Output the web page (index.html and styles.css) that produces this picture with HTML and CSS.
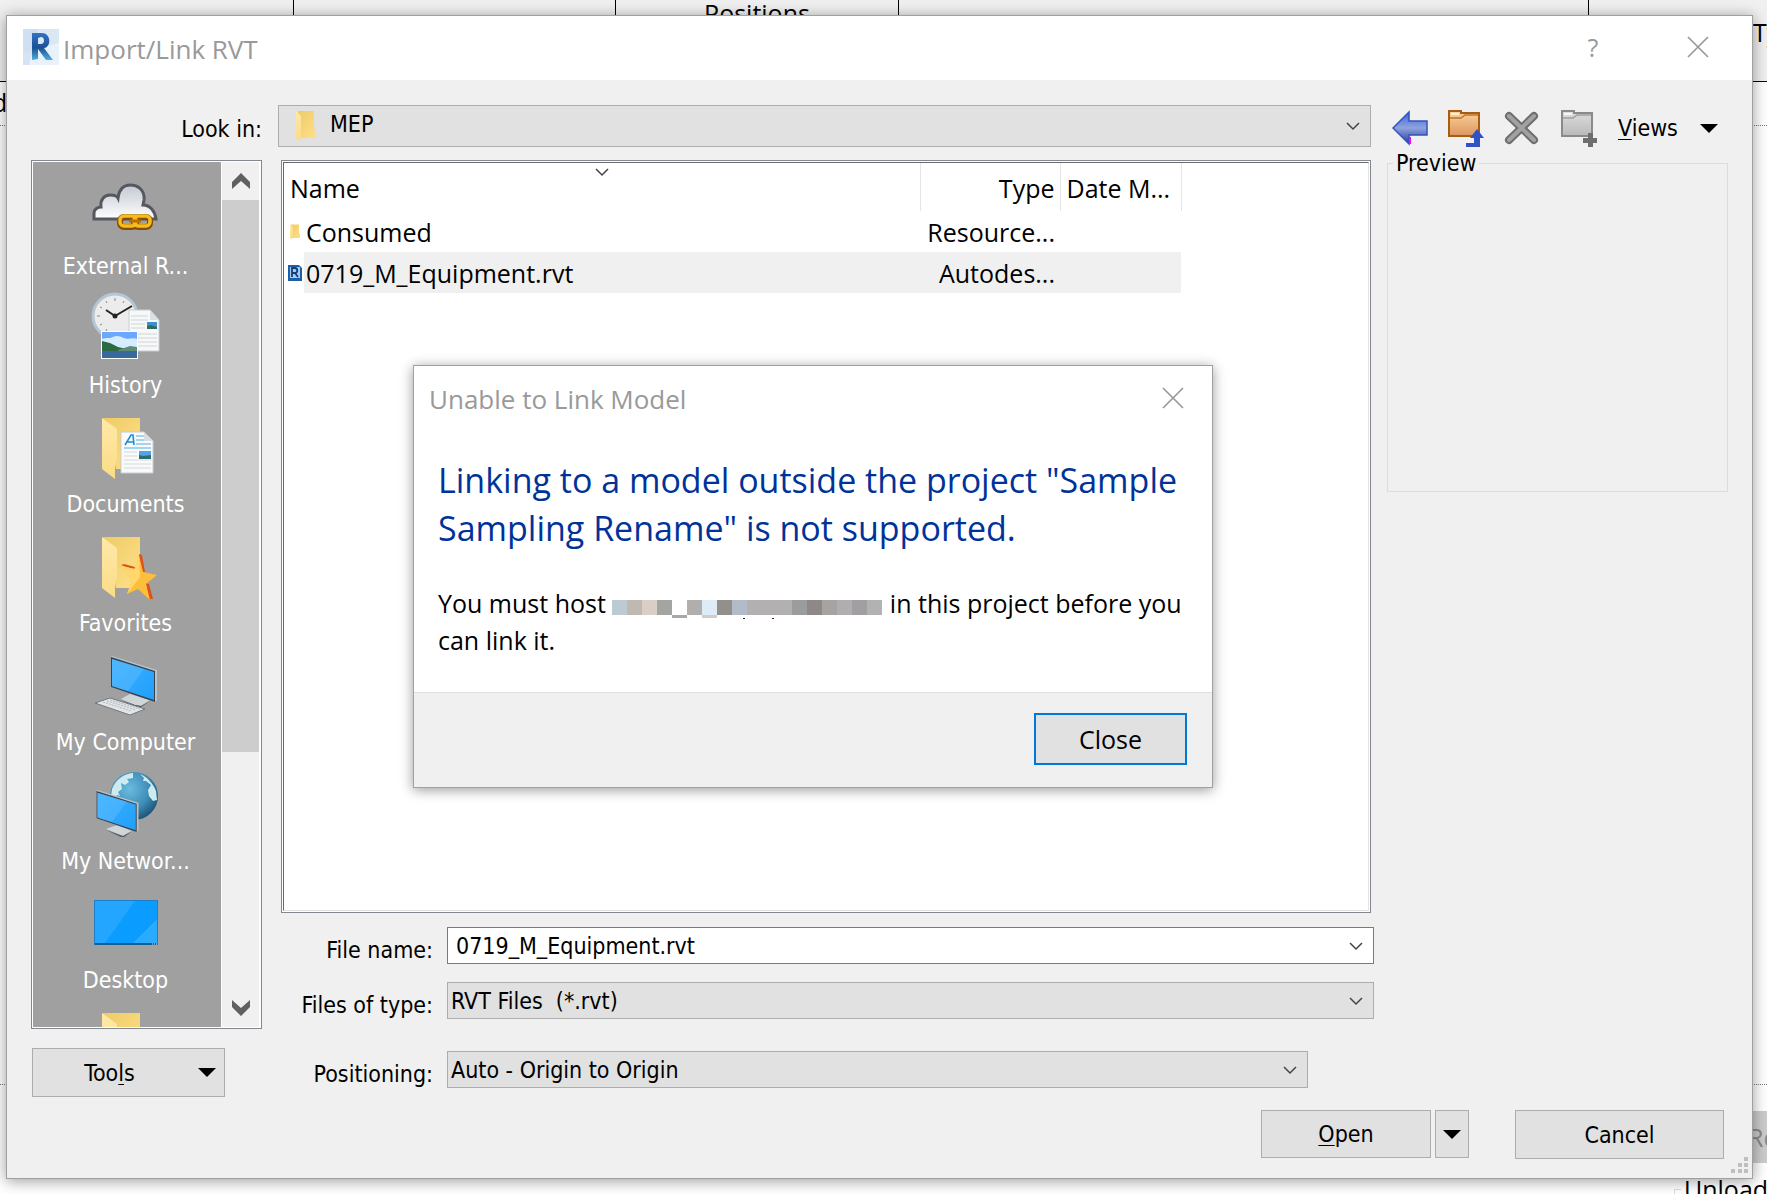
FILE: index.html
```
<!DOCTYPE html>
<html lang="en">
  <head>
    <meta charset="UTF-8" />
    <meta name="viewport" content="width=device-width, initial-scale=1.0" />
    <title>Import/Link RVT</title>
    <link rel="stylesheet" href="styles.css">
  </head>
  <body>
    <!-- shared shapes -->
    <svg class="defs" width="0" height="0" aria-hidden="true">
      <defs>
        <linearGradient id="gFolder" x1="0" y1="0" x2="1" y2="1">
          <stop offset="0" stop-color="#eecb66" />
          <stop offset="1" stop-color="#ffe08a" />
        </linearGradient>
        <linearGradient id="gFlap" x1="0" y1="0" x2="0" y2="1">
          <stop offset="0" stop-color="#ffe9a8" />
          <stop offset="1" stop-color="#fbdc86" />
        </linearGradient>
        <linearGradient id="gScreen" x1="0" y1="0" x2="1" y2="1">
          <stop offset="0" stop-color="#3fb0ff" />
          <stop offset="1" stop-color="#1fa0fb" />
        </linearGradient>
        <linearGradient id="gR" x1="0" y1="0" x2="0" y2="1">
          <stop offset="0" stop-color="#2f74c4" />
          <stop offset="0.55" stop-color="#1d4f94" />
          <stop offset="1" stop-color="#4db0d8" />
        </linearGradient>
        <symbol id="chevron" viewBox="0 0 14 9">
          <path d="M1 1l6 6 6-6" fill="none" stroke="#444" stroke-width="1.5" />
        </symbol>
        <symbol id="cross" viewBox="0 0 22 22">
          <path d="M1 1l20 20M21 1L1 21" fill="none" stroke="#999" stroke-width="1.7" />
        </symbol>
        <symbol id="triangle" viewBox="0 0 18 9">
          <path d="M0 0h18l-9 9z" />
        </symbol>
        <symbol id="smallFolder" viewBox="0 0 20 32">
          <path d="M2 1h16v17l2 2v8H4z" fill="url(#gFolder)" />
          <path d="M0 1l5 5v22l-1 3-4-3z" fill="url(#gFlap)" />
        </symbol>
        <symbol id="folder" viewBox="0 0 40 62">
          <path d="M1 0h37v51H14z" fill="url(#gFolder)" />
          <path d="M0 0l15 11v31l-2 3v16L0 51z" fill="url(#gFlap)" />
        </symbol>
        <symbol id="monitor" viewBox="0 0 46 46">
          <path d="M0 1l1-1 45 14v30l-2 2L0 31z" fill="#b9c2c9" />
          <path d="M0 1l44 14v31L0 31z" fill="#3a4249" />
          <path d="M1 3l42 13v28L1 30z" fill="url(#gScreen)" />
          <path d="M1 3l32 10-16 22L1 30z" fill="#5cbcff" opacity="0.5" />
        </symbol>
      </defs>
    </svg>

    <!-- Manage Links window that sits behind the dialog -->
    <div class="backdrop">
      <div class="backdrop-head">
        <span></span>
        <span></span>
        <span class="positions">Positions</span>
        <span></span>
        <span class="path-type">Type</span>
      </div>
      <div class="backdrop-row">d</div>
      <div class="backdrop-list"></div>
      <button class="reload" type="button" disabled>Reload</button>
      <fieldset class="unload">
        <legend>Unload</legend>
      </fieldset>
    </div>

    <main class="dialog">
      <header class="titlebar">
        <svg width="36" height="36" viewBox="0 0 36 36">
          <rect width="36" height="36" fill="#dbe7f5" />
          <path d="M0 24L36 14V36H0z" fill="#e9f1fa" />
          <path d="M0 0H15L6 36H0z" fill="#c9daf0" opacity="0.6" />
          <path fill-rule="evenodd" d="M9 4H18C28 3 29 18 21 19L30 31H23L15 20V30L9 31V7zM15 9V15H18C22 15 22 8 18 8z" fill="url(#gR)" />
        </svg>
        <h1>Import/Link RVT</h1>
        <button class="title-btn" type="button">?</button>
        <button class="title-btn" type="button" aria-label="Close window">
          <svg width="22" height="22"><use href="#cross" /></svg>
        </button>
      </header>

      <div class="content">
        <div class="left">
          <label class="look-label" for="lookIn">Look in:</label>
          <div class="places">
            <nav class="places-list">
              <button class="place" type="button">
                <svg width="72" height="72" viewBox="0 0 72 72">
                  <defs>
                    <linearGradient id="gCloud" x1="0" y1="0" x2="0" y2="1">
                      <stop offset="0" stop-color="#c3c8d2" />
                      <stop offset="1" stop-color="#ffffff" />
                    </linearGradient>
                  </defs>
                  <path d="M4 49V43C4 39 8 37 11 37C10 30 14 25 20 25C24 25 27 26 28 28C29 19 34 15 40 15C48 15 55 20 54 30L53 35C60 35 65 41 66 49z" fill="url(#gCloud)" stroke="#55595f" stroke-width="3" />
                  <g fill="none" stroke="#8a4b00" stroke-width="6">
                    <rect x="30" y="47" width="16" height="10" rx="4" />
                    <rect x="44" y="47" width="16" height="10" rx="4" />
                  </g>
                  <g fill="none" stroke="#f2bd1d" stroke-width="3.5">
                    <rect x="30" y="46" width="16" height="10" rx="4" />
                    <rect x="44" y="46" width="16" height="10" rx="4" />
                  </g>
                  <path d="M39 51h12" stroke="#b86e00" stroke-width="3" />
                </svg>
                <span>External R...</span>
              </button>
              <button class="place" type="button">
                <svg width="72" height="72" viewBox="0 0 72 72">
                  <circle cx="25" cy="27" r="22" fill="#ececec" stroke="#b4c6d3" stroke-width="3" />
                  <path d="M25 9v3M25 42v3M7 27h3M40 27h3M16 12l1 2M34 12l-1 2M10 18l2 1M10 36l2-1M16 42l1-2" stroke="#8c8c8c" stroke-width="1" />
                  <path d="M25 27L42 17M25 27L16 21" stroke="#222" stroke-width="2" />
                  <circle cx="25" cy="27" r="2.5" fill="#222" />
                  <path d="M39 21H60L69 31V62H39z" fill="#f7f8f9" stroke="#c9ccd0" />
                  <path d="M60 21V31H69z" fill="#dcdfe2" />
                  <path d="M41 27h17M41 31h17M41 35h14M41 39h14M48 45h19M48 49h19M48 53h19M48 57h19" stroke="#d2d5d8" />
                  <rect x="57" y="33" width="10" height="7" fill="#3f8fd0" />
                  <path d="M57 37l4-1 6 2v2H57z" fill="#2d6b5c" />
                  <rect x="11" y="42" width="37" height="28" fill="#fff" />
                  <rect x="12" y="43" width="35" height="26" fill="#6ba6ff" />
                  <path d="M12 50c4-2 8 0 11-2s7-1 11 1 9-1 13 1v12H12z" fill="#d5edff" />
                  <path d="M12 52l8 2 8 4 9 2v2H12z" fill="#2e6a41" />
                  <path d="M28 61l12-4 7 1v5H28z" fill="#5f8c74" />
                  <path d="M12 62h35v7H12z" fill="#38699d" />
                </svg>
                <span>History</span>
              </button>
              <button class="place" type="button">
                <svg width="72" height="72" viewBox="0 0 72 72">
                  <use href="#folder" x="12" y="10" width="40" height="62" />
                  <path d="M31 24H54L63 33V65H31z" fill="#f9fafb" stroke="#c9ccd0" />
                  <path d="M54 24V33H63z" fill="#d9dde1" />
                  <path d="M35 37L41 27H43L44 37M37 34H44" fill="none" stroke="#1b8fd8" stroke-width="1.6" />
                  <path d="M46 28h8M46 32h8M46 36h15M34 40h27" stroke="#8ac6ec" stroke-width="1.3" />
                  <path d="M34 44h13M34 48h13M34 52h27M34 56h27M34 60h27" stroke="#d5d8db" />
                  <rect x="49" y="43" width="12" height="8" fill="#4fa6e0" />
                  <path d="M49 47l4 1 8-1v4H49z" fill="#2c6a75" />
                </svg>
                <span>Documents</span>
              </button>
              <button class="place" type="button">
                <svg width="72" height="72" viewBox="0 0 72 72">
                  <use href="#folder" x="12" y="10" width="40" height="62" />
                  <path d="M49 27L52 28L55 45L50 45zM31 38L34 37L45 40L44 43zM56 56L59 57L63 72L59 74z" fill="#dd521c" />
                  <path d="M49 28L53 45L67 48L56 57L60 73L48 62L37 67L42 54L31 39L45 42z" fill="#fdbf3b" />
                  <path d="M49 28L45 42L31 39L42 54L37 67L50 50z" fill="#ffd76c" />
                </svg>
                <span>Favorites</span>
              </button>
              <button class="place" type="button">
                <svg width="72" height="72" viewBox="0 0 72 72">
                  <path d="M31 53L40 48L60 54L51 60L45 59z" fill="#cfd6da" />
                  <path d="M31 54l14 5 6 1 9-5-9 6-6-1z" fill="#444b50" />
                  <path d="M5 57L20 52L55 63L40 69z" fill="#e3e6e8" stroke="#73797e" />
                  <path d="M13 56l28 9M17 55l29 9M20 54l30 9" stroke="#b3b8bc" stroke-width="1" stroke-dasharray="2 1" />
                  <use href="#monitor" x="21" y="10" width="46" height="46" />
                </svg>
                <span>My Computer</span>
              </button>
              <button class="place" type="button">
                <svg width="72" height="72" viewBox="0 0 72 72">
                  <defs>
                    <radialGradient id="gGlobe" cx="0.4" cy="0.35" r="0.7">
                      <stop offset="0" stop-color="#6bbbe0" />
                      <stop offset="0.6" stop-color="#3d8db8" />
                      <stop offset="1" stop-color="#1c4f6e" />
                    </radialGradient>
                  </defs>
                  <circle cx="44" cy="31" r="24" fill="url(#gGlobe)" />
                  <path d="M22 24C26 14 34 9 43 8L43 13L37 14L39 17L35 20L31 18L32 24L28 27L30 31L27 30L24 34L21 32zM50 9C57 12 63 18 66 26L67 35L63 36L59 31L58 25L61 20L56 16L53 16L54 13z" fill="#cdebee" />
                  <path d="M16 64L27 60L42 66L33 71z" fill="#cfd6da" />
                  <path d="M16 65l17 6 9-5-9 7z" fill="#555c61" />
                  <use href="#monitor" x="6" y="25" width="43" height="42" />
                </svg>
                <span>My Networ...</span>
              </button>
              <button class="place" type="button">
                <svg width="72" height="72" viewBox="0 0 72 72">
                  <rect x="4" y="16" width="64" height="45" fill="#1f7fc4" />
                  <rect x="5" y="17" width="62" height="42" fill="#0a9dff" />
                  <path d="M5 17H45L15 59H5z" fill="#23a6ff" />
                  <path d="M67 35V59H43z" fill="#36b0ff" opacity="0.7" />
                  <path d="M5 60h62" stroke="#0b5f96" stroke-width="2" />
                  <path d="M62 60h5" stroke="#cfe6f5" stroke-dasharray="1 1" />
                </svg>
                <span>Desktop</span>
              </button>
              <button class="place" type="button" aria-label="Folder">
                <svg width="72" height="72" viewBox="0 0 72 72">
                  <use href="#folder" x="12" y="10" width="40" height="62" />
                </svg>
              </button>
            </nav>
            <div class="scrollbar">
              <button type="button" aria-label="Scroll up">
                <svg width="18" height="16"><path d="M0 9l9-9 9 9v7L9 8l-9 8z" fill="#606060" /></svg>
              </button>
              <div class="thumb"></div>
              <button class="down" type="button" aria-label="Scroll down">
                <svg width="18" height="16"><path d="M0 0l9 8 9-8v7l-9 9-9-9z" fill="#606060" /></svg>
              </button>
            </div>
          </div>
          <button class="btn tools" type="button">
            <span>Too<u>l</u>s</span>
            <svg width="18" height="9"><use href="#triangle" /></svg>
          </button>
        </div>

        <div class="middle">
          <div class="combo look-in">
            <svg class="combo-icon" width="20" height="32"><use href="#smallFolder" /></svg>
            <select id="lookIn">
              <option>MEP</option>
            </select>
            <svg class="chevron" width="14" height="9"><use href="#chevron" /></svg>
          </div>

          <div class="file-list">
            <div class="file-inner">
              <table>
                <colgroup>
                  <col class="col-name" />
                  <col class="col-type" />
                  <col class="col-date" />
                </colgroup>
                <thead>
                  <tr>
                    <th>Name
                      <svg class="sort" width="14" height="9"><use href="#chevron" /></svg>
                    </th>
                    <th class="type">Type</th>
                    <th>Date M...</th>
                  </tr>
                </thead>
                <tbody>
                  <tr>
                    <td>
                      <div class="file">
                        <svg width="14" height="16" viewBox="0 0 28 32"><use href="#smallFolder" x="4" y="0" width="20" height="32" /></svg>
                        <span>Consumed</span>
                      </div>
                    </td>
                    <td class="type">Resource...</td>
                    <td></td>
                  </tr>
                  <tr class="selected">
                    <td>
                      <div class="file">
                        <svg width="14" height="16" viewBox="0 0 14 16">
                          <path d="M0 0H11L14 3V16H0z" fill="#1b5fa8" />
                          <rect x="2" y="2" width="10" height="11" fill="#a9cdf0" />
                          <path d="M4 12V3H7C10 3 10 8 7 8L10 12M4 8H7" fill="none" stroke="#123f7c" stroke-width="1.8" />
                        </svg>
                        <span>0719_M_Equipment.rvt</span>
                      </div>
                    </td>
                    <td class="type">Autodes...</td>
                    <td></td>
                  </tr>
                </tbody>
              </table>
            </div>
          </div>

          <form class="fields">
            <label for="fileName">File name:</label>
            <div class="combo">
              <input id="fileName" type="text" value="0719_M_Equipment.rvt" />
              <svg class="chevron" width="14" height="9"><use href="#chevron" /></svg>
            </div>
            <label for="fileType">Files of type:</label>
            <div class="combo">
              <select id="fileType">
                <option>RVT Files &nbsp;(*.rvt)</option>
              </select>
              <svg class="chevron" width="14" height="9"><use href="#chevron" /></svg>
            </div>
            <label class="spaced" for="positioning">Positioning:</label>
            <div class="combo spaced short">
              <select id="positioning">
                <option>Auto - Origin to Origin</option>
              </select>
              <svg class="chevron" width="14" height="9"><use href="#chevron" /></svg>
            </div>
          </form>
        </div>

        <div class="right">
          <div class="toolbar">
            <button type="button" aria-label="Back">
              <svg width="37" height="38" viewBox="0 0 37 38">
                <defs>
                  <linearGradient id="gBack" x1="0" y1="0" x2="0" y2="1">
                    <stop offset="0" stop-color="#3c62e0" />
                    <stop offset="0.5" stop-color="#8fa3dc" />
                    <stop offset="1" stop-color="#1f3a9c" />
                  </linearGradient>
                </defs>
                <path d="M1 19L17 3V12H35V26H17V35z" fill="url(#gBack)" stroke="#3352bd" stroke-width="1.5" />
                <path d="M18 28v7" stroke="#f0f" stroke-width="2" />
              </svg>
            </button>
            <button type="button" aria-label="Up one level">
              <svg width="37" height="38" viewBox="0 0 37 38">
                <defs>
                  <linearGradient id="gUp" x1="0" y1="0" x2="0" y2="1">
                    <stop offset="0" stop-color="#fbd39a" />
                    <stop offset="1" stop-color="#dd9560" />
                  </linearGradient>
                </defs>
                <path d="M1 27V2H13V4H31V27z" fill="url(#gUp)" stroke="#a85d14" stroke-width="2" />
                <path d="M2 9H13L17 6H30" fill="none" stroke="#b9762f" stroke-width="1.5" />
                <path d="M3 4h8v2H3z" fill="#fff0d2" />
                <path d="M29 20l7 9h-4v9H18v-4h8v-5h-4z" fill="#2f53c4" />
              </svg>
            </button>
            <button type="button" aria-label="Delete">
              <svg width="37" height="38" viewBox="0 0 37 38">
                <path d="M5 7L30 31M30 7L5 31" stroke="#6f6f6f" stroke-width="8" stroke-linecap="round" />
                <path d="M5 7L30 31M30 7L5 31" stroke="#a2a2a2" stroke-width="4" stroke-linecap="round" />
              </svg>
            </button>
            <button type="button" aria-label="New folder">
              <svg width="37" height="38" viewBox="0 0 37 38">
                <defs>
                  <linearGradient id="gNew" x1="0" y1="0" x2="0" y2="1">
                    <stop offset="0" stop-color="#dedede" />
                    <stop offset="1" stop-color="#b9b9b9" />
                  </linearGradient>
                </defs>
                <path d="M2 27V2H14V4H32V27z" fill="url(#gNew)" stroke="#8a8a8a" stroke-width="2" />
                <path d="M3 9H13L17 6H31" fill="none" stroke="#a0a0a0" stroke-width="1.5" />
                <path d="M4 4h8v2H4z" fill="#f6f6f6" />
                <path d="M28 24h5v5h5v5h-5v4h-5v-4h-5v-5h5z" fill="#6e6e6e" />
              </svg>
            </button>
            <button class="views" type="button">
              <span><u>V</u>iews</span>
              <svg width="18" height="9"><use href="#triangle" /></svg>
            </button>
          </div>
          <fieldset class="preview">
            <legend>Preview</legend>
          </fieldset>
        </div>
      </div>

      <footer class="actions">
        <button class="btn open" type="button"><span><u>O</u>pen</span></button>
        <button class="btn open-menu" type="button" aria-label="Open options">
          <svg width="18" height="9"><use href="#triangle" /></svg>
        </button>
        <button class="btn cancel" type="button">Cancel</button>
      </footer>
      <svg class="grip" width="17" height="17">
        <path d="M13 0h4v4h-4zM13 6h4v4h-4zM13 12h4v4h-4zM7 6h4v4H7zM7 12h4v4H7zM0 12h4v4H0z" fill="#bfbfbf" />
      </svg>

      <section class="modal" role="alertdialog" aria-labelledby="modalTitle">
        <header class="modal-title">
          <h2 id="modalTitle">Unable to Link Model</h2>
          <button type="button" aria-label="Close message">
            <svg width="22" height="22"><use href="#cross" /></svg>
          </button>
        </header>
        <div class="modal-body">
          <p class="headline">Linking to a model outside the project "Sample Sampling Rename" is not supported.</p>
          <p>You must host <svg class="masked" width="271" height="20">
              <rect width="15" height="15" fill="#bccad4" />
              <rect x="15" width="15" height="15" fill="#bfb8b3" />
              <rect x="30" width="15" height="15" fill="#d9cfc4" />
              <rect x="45" width="15" height="15" fill="#a3a5a3" />
              <rect x="60" y="15" width="15" height="3" fill="#a8a8a8" />
              <rect x="75" width="15" height="15" fill="#b1afae" />
              <rect x="90" width="15" height="15" fill="#deecf8" />
              <rect x="90" y="15" width="15" height="3" fill="#d2cbc6" />
              <rect x="105" width="15" height="15" fill="#92908d" />
              <rect x="120" width="15" height="15" fill="#b3bbc8" />
              <rect x="135" width="45" height="15" fill="#b2b0b1" />
              <rect x="180" width="15" height="15" fill="#9b9c9e" />
              <rect x="195" width="15" height="15" fill="#8e8987" />
              <rect x="210" width="15" height="15" fill="#a5a4a2" />
              <rect x="225" width="15" height="15" fill="#b0aeb1" />
              <rect x="240" width="15" height="15" fill="#a19fa2" />
              <rect x="255" width="15" height="15" fill="#b2b2b2" />
              <path d="M131 18h2v1h-2zM160 18h2v1h-2z" fill="#222" />
            </svg> in this project before you can link it.</p>
        </div>
        <footer class="modal-footer">
          <button type="button">Close</button>
        </footer>
      </section>
    </main>
  </body>
</html>
```
FILE: styles.css
```
* {
  box-sizing: border-box;
}
body {
  margin: 0;
  min-height: 100vh;
  position: relative;
  overflow: hidden;
  background-color: #fff;
  color: #000;
  font-family: "DejaVu Sans Condensed", "DejaVu Sans", sans-serif;
  font-size: 23px;
  line-height: 28px;
}
button,
select,
input {
  font: inherit;
  color: inherit;
  border: none;
  border-radius: 0;
  background: none;
  padding: 0;
  margin: 0;
}
h1,
h2,
p {
  margin: 0;
  font-weight: normal;
}
svg {
  display: block;
  flex: none;
}
.defs {
  position: absolute;
}
u {
  text-decoration-thickness: 1px;
  text-underline-offset: 3px;
}

/* window behind */
.backdrop {
  position: absolute;
  inset: 0;
  overflow: hidden;
  display: flex;
  flex-direction: column;
  font-family: "Open Sans", sans-serif;
  font-size: 25px;
}
.backdrop-head {
  height: 82px;
  flex: none;
  display: grid;
  grid-template-columns: 294px 322px 283px 690px 1fr;
  background-color: #f0f0f0;
  border-bottom: 1px solid #000;
}
.backdrop-head span {
  border-right: 1px solid #000;
}
.backdrop-head .positions {
  line-height: 26px;
  text-align: center;
}
.backdrop-head .path-type {
  padding: 18px 0 0 164px;
}
.backdrop-row {
  height: 44px;
  flex: none;
  padding-top: 6px;
  text-indent: -8px;
  border-bottom: 1px dotted #777;
}
.backdrop-list {
  height: 959px;
  flex: none;
  border-bottom: 1px dotted #777;
}
.reload {
  align-self: flex-end;
  flex: none;
  width: 165px;
  height: 52px;
  margin: 26px -146px 0 0;
  background-color: #ccc;
  color: #888;
  text-align: left;
}
.unload {
  align-self: flex-end;
  flex: none;
  width: 200px;
  height: 80px;
  margin: 12px -107px 0 0;
  padding: 0 0 0 6px;
  border: 1px solid #dcdcdc;
}
.unload legend {
  padding: 0 3px;
}

/* main dialog */
.dialog {
  position: relative;
  margin: 15px 14px 16px 6px;
  background-color: #f0f0f0;
  border: 1px solid #a0a0a0;
  box-shadow: 0 2px 14px rgba(0, 0, 0, 0.4);
}
.titlebar {
  height: 64px;
  display: flex;
  align-items: center;
  padding: 0 29px 2px 16px;
  background-color: #fff;
}
.titlebar h1 {
  flex: 1;
  padding: 4px 0 0 4px;
  font-family: "Open Sans", sans-serif;
  font-size: 26px;
  color: #999;
}
.title-btn {
  width: 50px;
  height: 40px;
  display: flex;
  align-items: center;
  justify-content: center;
  font-family: "Open Sans", sans-serif;
  font-size: 25px;
  color: #999;
}
.title-btn + .title-btn {
  margin-left: 55px;
}
.content {
  display: flex;
  padding: 0 24px;
}

/* left column */
.left {
  width: 231px;
  flex: none;
}
.look-label {
  display: block;
  height: 80px;
  padding-top: 35px;
  text-align: right;
}
.places {
  display: flex;
  height: 869px;
  border: 1px solid #828790;
  padding: 1px;
  background-color: #fff;
}
.places-list {
  flex: 1;
  overflow: hidden;
  background-color: #a0a0a0;
  color: #fff;
}
.place {
  display: flex;
  flex-direction: column;
  align-items: center;
  width: 100%;
  height: 119px;
  padding: 8px 3px 0 0;
}
.place span {
  margin-top: 10px;
}
.scrollbar {
  display: flex;
  flex-direction: column;
  width: 37px;
  margin: 0 1px;
  background-color: #f0f0f0;
}
.scrollbar button {
  height: 38px;
  display: flex;
  align-items: center;
  justify-content: center;
}
.thumb {
  height: 552px;
  background-color: #cdcdcd;
}
.down {
  margin-top: auto;
}
.btn {
  display: flex;
  align-items: center;
  justify-content: center;
  background-color: #e1e1e1;
  border: 1px solid #adadad;
}
.tools {
  width: 193px;
  height: 49px;
  margin: 19px 0 0 1px;
  padding-right: 8px;
}
.tools span {
  flex: 1;
  padding-right: 12px;
}

/* middle column */
.middle {
  flex: 1;
  min-width: 0;
  margin: 0 13px 0 16px;
  padding-top: 25px;
}
.combo {
  position: relative;
  height: 37px;
}
.combo select,
.combo input {
  display: block;
  width: 100%;
  height: 100%;
  padding: 0 40px 0 3px;
  background-color: #e1e1e1;
  border: 1px solid #adadad;
  appearance: none;
}
.combo input {
  padding-left: 8px;
  background-color: #fff;
  border-color: #7a7a7a;
}
.chevron {
  position: absolute;
  right: 11px;
  top: 50%;
  margin-top: -4px;
  pointer-events: none;
}
.look-in {
  height: 42px;
  margin-right: 3px;
}
.look-in select {
  padding: 0 40px 4px 51px;
}
.combo-icon {
  position: absolute;
  left: 18px;
  top: 5px;
}
.file-list {
  height: 753px;
  margin: 13px 3px 14px;
  padding: 1px;
  background-color: #fff;
  border: 1px solid #828790;
}
.file-inner {
  height: 100%;
  border: 1px solid;
  border-color: #696969 #e3e3e3 #e3e3e3 #696969;
}
table {
  width: 897px;
  table-layout: fixed;
  border-collapse: collapse;
  font-family: "Open Sans", sans-serif;
  font-size: 25px;
  line-height: 32px;
}
.col-name {
  width: 636px;
}
.col-type {
  width: 140px;
}
.col-date {
  width: 121px;
}
th {
  position: relative;
  height: 48px;
  padding: 2px 0 0 6px;
  font-weight: normal;
  text-align: left;
  white-space: nowrap;
  border-right: 1px solid #e5e5e5;
}
.sort {
  position: absolute;
  left: 50%;
  top: 5px;
  margin-left: -7px;
}
td {
  height: 41px;
  padding: 0;
  white-space: nowrap;
}
th.type,
td.type {
  text-align: right;
  padding-right: 5px;
}
.file {
  display: flex;
  align-items: center;
  gap: 4px;
  padding-left: 4px;
}
.selected td {
  background-color: #f0f0f0;
}
.selected td:first-child {
  background: linear-gradient(to right, #fff 20px, #f0f0f0 20px);
}
.fields {
  display: grid;
  grid-template-columns: 155px 1fr;
  column-gap: 14px;
  row-gap: 18px;
}
.fields label {
  padding-top: 9px;
  text-align: right;
}
.fields .spaced {
  margin-top: 14px;
}
.short {
  margin-right: 66px;
}

/* right column */
.right {
  width: 341px;
  flex: none;
  padding-top: 27px;
}
.toolbar {
  display: flex;
  align-items: center;
  gap: 19px;
  height: 42px;
  padding-left: 5px;
}
.views {
  display: flex;
  align-items: center;
  gap: 22px;
  padding-left: 2px;
}
.preview {
  height: 343px;
  margin: 0;
  padding: 0 0 0 5px;
  border: 1px solid #dcdcdc;
}
.preview legend {
  padding: 0 3px;
}

.actions {
  display: flex;
  justify-content: flex-end;
  padding: 13px 28px 19px;
}
.open {
  width: 170px;
  height: 48px;
}
.open-menu {
  width: 34px;
  height: 48px;
  margin: 0 46px 0 4px;
}
.cancel {
  width: 209px;
  height: 49px;
}
.grip {
  position: absolute;
  right: 4px;
  bottom: 4px;
}

/* error message */
.modal {
  position: absolute;
  left: 406px;
  top: 349px;
  width: 800px;
  background-color: #fff;
  border: 1px solid #a0a0a0;
  box-shadow: 0 2px 12px rgba(0, 0, 0, 0.4);
  font-family: "Open Sans", sans-serif;
  font-size: 25px;
}
.modal-title {
  display: flex;
  align-items: center;
  justify-content: space-between;
  height: 64px;
  padding: 0 28px 0 15px;
  color: #999;
}
.modal-title h2 {
  font-size: 26px;
  padding-top: 2px;
}
.modal-body {
  height: 262px;
  padding: 26px 18px 0 24px;
  line-height: 37px;
}
.headline {
  margin-bottom: 33px;
  color: #003399;
  font-size: 34px;
  line-height: 48px;
}
.masked {
  display: inline-block;
  vertical-align: -7px;
}
.modal-footer {
  display: flex;
  justify-content: flex-end;
  padding: 20px 25px 22px;
  background-color: #f0f0f0;
  border-top: 1px solid #dfdfdf;
}
.modal-footer button {
  width: 153px;
  height: 52px;
  background-color: #e1e1e1;
  border: 2px solid #0078d7;
}
```
